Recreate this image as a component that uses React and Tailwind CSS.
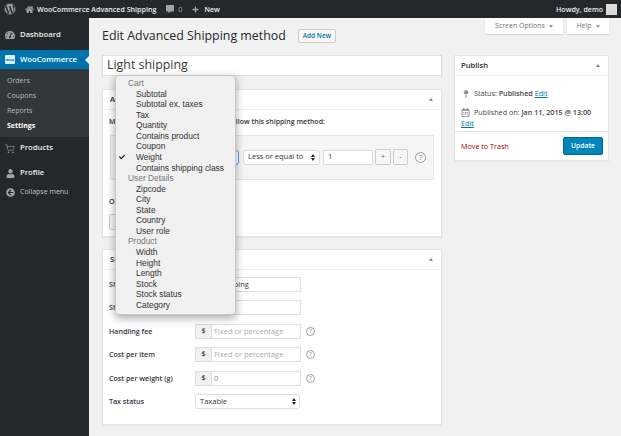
import React from "react";
import { FaWordpress, FaHome, FaCommentAlt, FaPlus, FaTachometerAlt, FaUser, FaArrowCircleLeft, FaMapPin, FaRegCalendarAlt, FaCheck } from "react-icons/fa";
import { ShoppingCart } from "lucide-react";

const font = { fontFamily: '"Open Sans","Noto Sans",sans-serif' };

function Help({ size = "w-[9px] h-[9px] text-[6px] border-[#999] text-[#888]" }) {
  return <span className={`flex shrink-0 items-center justify-center rounded-full border ${size}`}>?</span>;
}
function Caret() {
  return <span className="h-0 w-0 border-x-[2.5px] border-b-[3px] border-x-transparent border-b-[#888]" />;
}
function CaretDown() {
  return <span className="h-0 w-0 border-x-[2.5px] border-t-[3px] border-x-transparent border-t-[#999]" />;
}
function SelectArrows() {
  return (
    <span className="flex shrink-0 flex-col gap-[1px]">
      <span className="h-0 w-0 border-x-[2px] border-b-[3px] border-x-transparent border-b-[#222]" />
      <span className="h-0 w-0 border-x-[2px] border-t-[3px] border-x-transparent border-t-[#222]" />
    </span>
  );
}
function PanelHeader({ title }) {
  return (
    <div className="flex h-[20px] items-center justify-between border-b border-[#eeeeee] pl-[7px] pr-[8px]">
      <span className="text-[7.6px] font-semibold text-[#23282d]">{title}</span>
      <Caret />
    </div>
  );
}
function PriceRow({ label, ph, value, top, help = true }) {
  return (
    <div className={`flex items-center ${top}`}>
      <span className="w-[86px] text-[7.1px] font-semibold text-[#32373c]">{label}</span>
      <span className="flex h-[15px] w-[17px] items-center justify-center border border-[#dddddd] bg-[#f1f1f1] text-[7px] font-semibold text-[#444]">$</span>
      <span className={`flex h-[15px] w-[89px] items-center border-y border-r border-[#dddddd] bg-white pl-[2px] text-[7.5px] ${value ? "text-[#888]" : "text-[#aaa]"}`}>{value || ph}</span>
      {help && <span className="ml-[5px]"><Help /></span>}
    </div>
  );
}
function SideItem({ icon, label, className = "" }) {
  return (
    <div className={`flex items-center gap-[5px] pl-[5px] text-[7.7px] font-semibold text-[#eeeeee] ${className}`}>
      <span className="flex w-[10px] justify-center text-[#a0a5aa]">{icon}</span>
      <span>{label}</span>
    </div>
  );
}
const groups = [
  ["Cart", ["Subtotal", "Subtotal ex. taxes", "Tax", "Quantity", "Contains product", "Coupon", "Weight", "Contains shipping class"]],
  ["User Details", ["Zipcode", "City", "State", "Country", "User role"]],
  ["Product", ["Width", "Height", "Length", "Stock", "Stock status", "Category"]],
];

export default function App() {
  return (
    <div style={font} className="relative flex h-[436px] w-[621px] flex-col overflow-hidden bg-[#f1f1f1]">
      <header className="flex h-[18px] shrink-0 items-center bg-[#23282d] text-[7.1px] font-semibold text-[#eeeeee]">
        <FaWordpress className="ml-[4px] text-[12px] text-[#a0a5aa]" />
        <FaHome className="ml-[9px] text-[9px] text-[#a0a5aa]" />
        <span className="ml-[3px]">WooCommerce Advanced Shipping</span>
        <FaCommentAlt className="ml-[10px] text-[8px] text-[#a0a5aa]" />
        <span className="ml-[4px] font-normal text-[#a0a5aa]">0</span>
        <FaPlus className="ml-[10px] text-[7px] text-[#a0a5aa]" />
        <span className="ml-[5px]">New</span>
        <span className="ml-auto">Howdy, demo</span>
        <span className="ml-[3px] mr-[4px] h-[11px] w-[11px] bg-[#dcdcdc]" />
      </header>
      <div className="flex min-h-0 flex-1">
        <aside className="w-[89px] shrink-0 bg-[#23282d] pt-[9px]">
          <SideItem icon={<FaTachometerAlt className="text-[10px]" />} label="Dashboard" className="h-[15px]" />
          <div className="relative mt-[8px] flex h-[19px] items-center gap-[5px] bg-[#0073aa] pl-[5px] text-[7.7px] font-semibold text-white">
            <span className="flex h-[9px] w-[10px] items-center justify-center rounded-[1px] bg-[#d9edf5] text-[4px] font-bold leading-none text-[#0073aa]">woo</span>
            <span>WooCommerce</span>
            <span className="absolute right-0 top-[6px] h-0 w-0 border-y-[4px] border-r-[4px] border-y-transparent border-r-[#f1f1f1]" />
          </div>
          <div className="flex h-[68px] flex-col gap-[3px] bg-[#32373c] pl-[7px] pt-[6px] text-[7px] leading-[12px] text-[#b4b9be]">
            <span>Orders</span>
            <span>Coupons</span>
            <span>Reports</span>
            <span className="font-bold text-white">Settings</span>
          </div>
          <SideItem icon={<ShoppingCart size={11} strokeWidth={1.5} />} label="Products" className="mt-[2px] h-[18px]" />
          <SideItem icon={<FaUser className="text-[9px]" />} label="Profile" className="mt-[7px] h-[18px]" />
          <div className="mt-[1px] flex h-[18px] items-center gap-[5px] pl-[6px] text-[7px] text-[#c0c4c8]">
            <FaArrowCircleLeft className="text-[9px] text-[#a0a5aa]" />
            <span>Collapse menu</span>
          </div>
        </aside>
        <main className="relative min-w-0 flex-1 pl-[13px] pr-[12px]">
          <div className="flex justify-end gap-[4px]">
            <div className="flex h-[16px] w-[78px] items-center justify-center gap-[4px] bg-white text-[7px] text-[#72777c] shadow-[0_1px_1px_rgba(0,0,0,0.1)]">Screen Options <CaretDown /></div>
            <div className="flex h-[16px] w-[42px] items-center justify-center gap-[4px] bg-white text-[7px] text-[#72777c] shadow-[0_1px_1px_rgba(0,0,0,0.1)]">Help <CaretDown /></div>
          </div>
          <div className="mt-[-7px] flex h-[18px] items-center">
            <h1 className="text-[12.4px] leading-none text-[#23282d]">Edit Advanced Shipping method</h1>
            <span className="ml-[12px] flex h-[14px] w-[38px] items-center justify-center rounded-[2px] border border-[#ccc] bg-[#f7f7f7] text-[6.5px] font-semibold text-[#0073aa]">Add New</span>
          </div>
          <div className="mt-[10px] flex items-start gap-[12px]">
            <div className="w-[340px] shrink-0">
              <div className="flex h-[21px] items-center border border-[#dddddd] bg-white pl-[4px] text-[12.4px] text-[#32373c]">Light shipping</div>
              <section className="mt-[13px] h-[148px] border border-[#e5e5e5] bg-white shadow-[0_1px_1px_rgba(0,0,0,0.04)]">
                <PanelHeader title="Advanced Shipping conditions" />
                <p className="mt-[7px] pl-[6px] text-[7px] font-semibold text-[#32373c]">Match all of the conditions below to allow this shipping method:</p>
                <div className="mx-[7px] mt-[7px] flex h-[45px] items-center justify-end border border-[#e5e5e5] bg-[#f5f5f5] pr-[7px]">
                  <span className="flex h-[15px] w-[77px] items-center justify-between rounded-[3px] border border-[#5b9dd9] bg-white pl-[4px] pr-[2px] text-[7.5px]">Weight<SelectArrows /></span>
                  <span className="ml-[4px] flex h-[15px] w-[77px] items-center justify-between rounded-[3px] border border-[#dddddd] bg-white px-[4px] text-[7.5px] text-[#32373c]">Less or equal to<SelectArrows /></span>
                  <span className="ml-[3px] flex h-[15px] w-[50px] items-center border border-[#dddddd] bg-white pl-[4px] text-[7.5px] text-[#32373c]">1</span>
                  <span className="ml-[2px] flex h-[16px] w-[16px] items-center justify-center rounded-[2px] border border-[#ccc] bg-[#f7f7f7] text-[7px] text-[#555]">+</span>
                  <span className="ml-[2px] flex h-[16px] w-[15px] items-center justify-center rounded-[2px] border border-[#ccc] bg-[#f7f7f7] text-[7px] text-[#555]">-</span>
                  <span className="ml-[7px]"><Help size="w-[11px] h-[11px] text-[8px] border-[#999] text-[#888]" /></span>
                </div>
                <p className="mt-[17px] pl-[6px] text-[7px] font-semibold text-[#32373c]">Or</p>
                <span className="ml-[6px] mt-[7px] block h-[16px] w-[60px] rounded-[2px] border border-[#ccc] bg-[#f7f7f7]" />
              </section>
              <section className="mt-[12px] h-[176px] border border-[#e5e5e5] bg-white shadow-[0_1px_1px_rgba(0,0,0,0.04)]">
                <PanelHeader title="Shipping settings" />
                <div className="pl-[6px]">
                  <div className="mt-[7px] flex items-center">
                    <span className="w-[86px] text-[7.1px] font-semibold text-[#32373c]">Shipping title</span>
                    <span className="flex h-[15px] w-[106px] items-center border border-[#dddddd] bg-white pl-[4px] text-[7.5px] text-[#32373c]">Light shipping</span>
                  </div>
                  <PriceRow label="Shipping cost" ph="" top="mt-[8px]" help={false} />
                  <PriceRow label="Handling fee" ph="Fixed or percentage" top="mt-[9px]" />
                  <PriceRow label="Cost per item" ph="Fixed or percentage" top="mt-[8px]" />
                  <PriceRow label="Cost per weight (g)" value="0" top="mt-[9px]" />
                  <div className="mt-[8px] flex items-center">
                    <span className="w-[86px] text-[7.1px] font-semibold text-[#32373c]">Tax status</span>
                    <span className="flex h-[15px] w-[105px] items-center justify-between rounded-[3px] border border-[#dddddd] bg-white pl-[4px] pr-[3px] text-[7.5px] text-[#32373c]">Taxable<SelectArrows /></span>
                  </div>
                </div>
              </section>
            </div>
            <section className="h-[106px] w-[155px] border border-[#e5e5e5] bg-white text-[7.2px] text-[#444] shadow-[0_1px_1px_rgba(0,0,0,0.04)]">
              <div className="flex h-[20px] items-center justify-between border-b border-[#eeeeee] pl-[6px] pr-[8px]">
                <span className="text-[7.6px] font-semibold text-[#23282d]">Publish</span>
                <Caret />
              </div>
              <div className="h-[56px] border-b border-[#dfdfdf] pl-[6px] pt-[12px] leading-[11px]">
                <div className="flex items-center gap-[4px]"><span className="flex w-[9px] justify-center"><FaMapPin className="text-[8px] text-[#82878c]" /></span><span>Status: <b className="font-semibold">Published</b> <span className="text-[#0073aa] underline">Edit</span></span></div>
                <div className="mt-[8px] flex items-center gap-[4px] whitespace-nowrap"><span className="flex w-[9px] justify-center"><FaRegCalendarAlt className="text-[9px] text-[#82878c]" /></span><span>Published on: <b className="font-semibold">Jan 11, 2015 @ 13:00</b></span></div>
                <div className="text-[#0073aa] underline">Edit</div>
              </div>
              <div className="flex items-center justify-between pl-[6px] pr-[5px] pt-[5px]">
                <span className="text-[#a00]">Move to Trash</span>
                <span className="flex h-[18px] w-[40px] items-center justify-center rounded-[2px] border border-[#006799] bg-[#0085ba] text-[6.8px] font-semibold text-white">Update</span>
              </div>
            </section>
          </div>
          <div className="absolute left-[26px] top-[57px] h-[240px] w-[121px] rounded-[4px] border border-[#c8c8c8] bg-[#f0f0f0] pt-[2px] font-['Liberation_Sans',sans-serif] text-[8.4px] leading-[10.57px] text-[#333] shadow-[0_3px_8px_rgba(0,0,0,0.35)]">
            {groups.map(([g, items]) => (
              <div key={g}>
                <div className="pl-[12px] text-[#777]">{g}</div>
                {items.map((i) => (
                  <div key={i} className="relative pl-[20px]">
                    {i === "Weight" && <FaCheck className="absolute left-[3px] top-[2px] text-[6px] text-[#222]" />}
                    {i}
                  </div>
                ))}
              </div>
            ))}
          </div>
        </main>
      </div>
    </div>
  );
}
